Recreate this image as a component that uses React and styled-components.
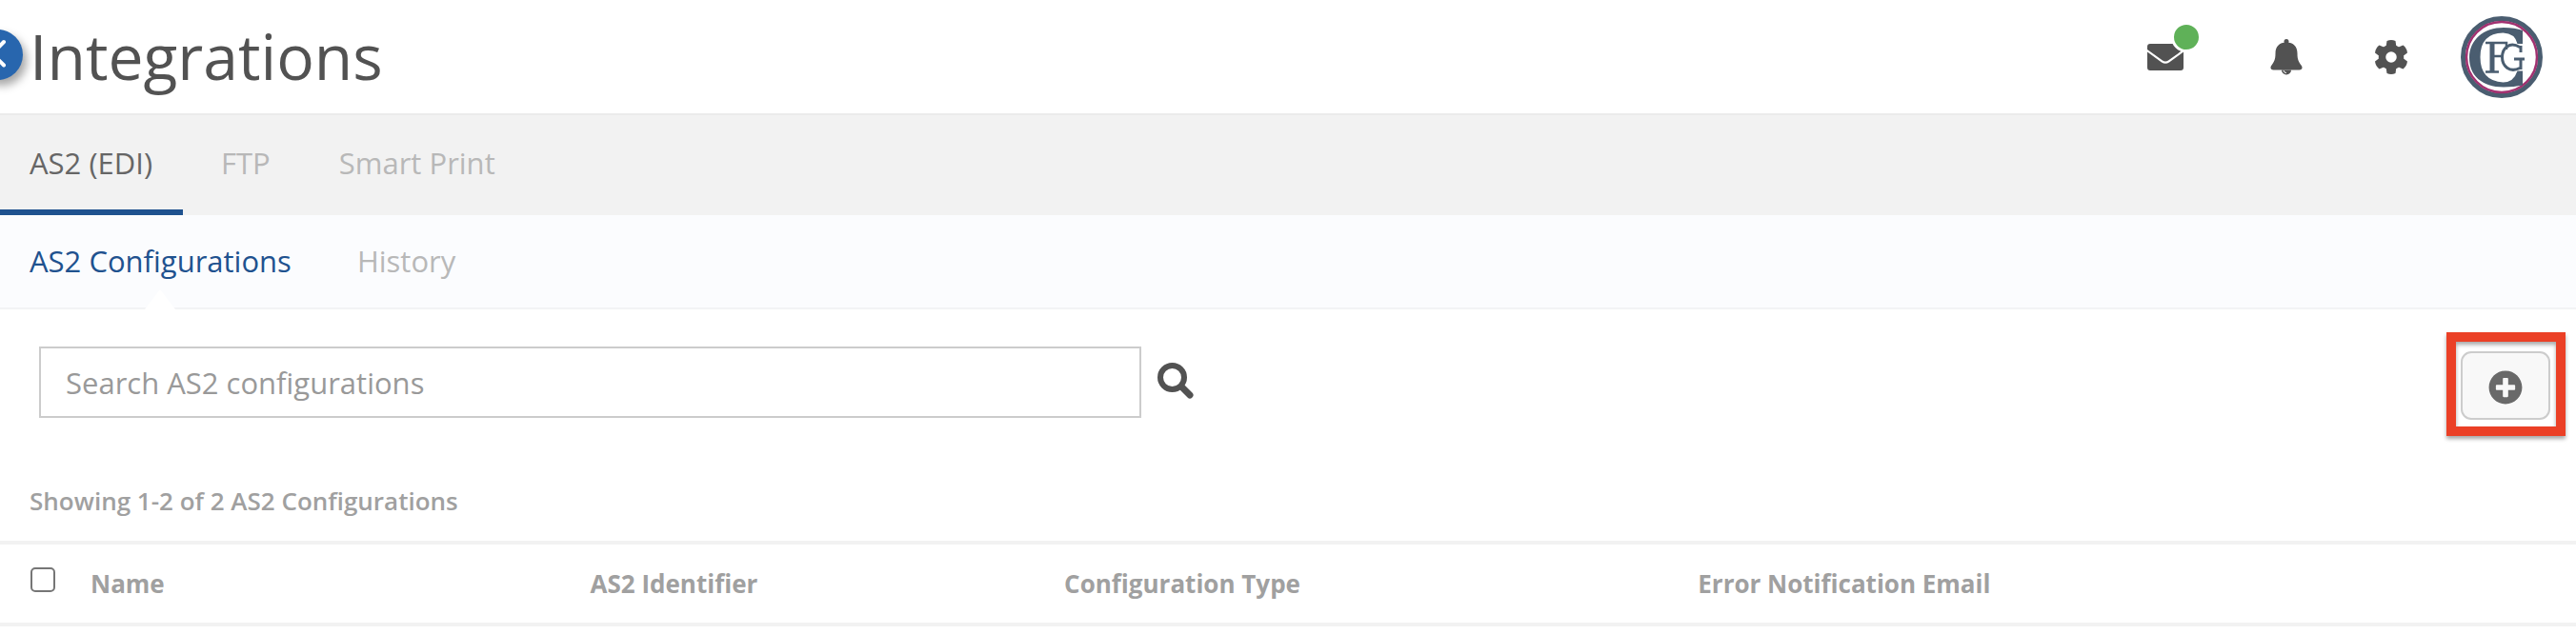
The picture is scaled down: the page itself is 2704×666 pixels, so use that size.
import React, { useState } from "react";
import styled, { createGlobalStyle } from "styled-components";
import { FaPlusCircle } from "react-icons/fa";

const GlobalStyle = createGlobalStyle`
  * {
    box-sizing: border-box;
  }

  body {
    margin: 0;
    background-color: #fff;
    color: #525252;
    font-family: "Open Sans", "Noto Sans", sans-serif;
    font-size: 31px;
  }
`;

// Header
const Header = styled.header`
  position: relative;
  display: flex;
  align-items: center;
  justify-content: space-between;
  height: 119px;
  padding: 0 35px 0 31px;
`;

const Title = styled.h1`
  position: relative;
  margin: 0;
  padding-bottom: 3px;
  font-size: 66px;
  font-weight: 400;
  line-height: 116px;
`;

const CollapseButton = styled.button`
  position: absolute;
  top: 31px;
  left: -29px;
  width: 53px;
  height: 53px;
  padding: 0;
  border: none;
  border-radius: 50%;
  background-color: #2866ae;
  box-shadow: 4px 6px 10px rgba(0, 0, 0, 0.35);
  cursor: pointer;

  svg {
    display: block;
  }
`;

const Actions = styled.div`
  display: flex;
  align-items: center;
`;

const IconButton = styled.button`
  position: relative;
  display: flex;
  justify-content: center;
  width: 38px;
  margin-right: ${(props) => props.$gap || "0"};
  padding: 0;
  border: none;
  background: none;
  color: #525252;
  cursor: pointer;
`;

const Badge = styled.span`
  position: absolute;
  top: -23px;
  right: -19px;
  width: 32px;
  height: 32px;
  border: 3px solid #fff;
  border-radius: 50%;
  background-color: #5fb158;
`;

const AvatarLink = styled.a`
  display: block;
  width: 86px;
  height: 86px;

  svg {
    display: block;
  }
`;

// Tabs
const TabBar = styled.nav`
  display: flex;
  gap: 9px;
  height: 107px;
  border-top: 2px solid #ebebeb;
  background-color: #f2f2f2;
`;

const Tab = styled.a`
  padding: 0 32px 0 31px;
  border-bottom: 6px solid ${(props) => (props.$active ? "#1f528f" : "transparent")};
  color: ${(props) => (props.$active ? "#666" : "#b8b8b8")};
  line-height: 100px;
  text-decoration: none;
`;

const SubTabBar = styled.nav`
  display: flex;
  gap: 8px;
  height: 99px;
  border-bottom: 2px solid #f2f3f5;
  background-color: #fbfcfe;
`;

const SubTab = styled.a`
  position: relative;
  padding: 0 30px 0 31px;
  color: ${(props) => (props.$active ? "#1f528f" : "#b8b8b8")};
  line-height: 96px;
  text-decoration: none;
`;

const Notch = styled.span`
  position: absolute;
  bottom: -2px;
  left: 50%;
  margin-left: -16px;
  border: 16px solid transparent;
  border-top: none;
  border-bottom: 21px solid #fff;
`;

// Search
const Toolbar = styled.div`
  display: flex;
  align-items: flex-start;
  justify-content: space-between;
  padding: 24px 11px 0 41px;
`;

const SearchForm = styled.form`
  display: flex;
  align-items: flex-start;
  width: 45.7%;
  padding-top: 15px;
`;

const SearchInput = styled.input`
  flex: 1;
  height: 75px;
  padding: 0 26px;
  border: 2px solid #ccc;
  color: #525252;
  font: inherit;

  &::placeholder {
    color: #999;
    opacity: 1;
  }
`;

const SearchButton = styled.button`
  margin: 17px 0 0 17px;
  padding: 0;
  border: none;
  background: none;
  cursor: pointer;

  svg {
    display: block;
  }
`;

const Highlight = styled.div`
  padding: 10px 6px 7px 5px;
  border: 10px solid #eb4026;
  box-shadow: 0 3px 4px rgba(0, 0, 0, 0.35), inset 0 3px 4px rgba(0, 0, 0, 0.35);
`;

const AddButton = styled.button`
  display: flex;
  align-items: center;
  justify-content: center;
  width: 94px;
  height: 72px;
  padding: 3px 0 0;
  border: 2px solid #ccc;
  border-radius: 11px;
  background-color: #f8f8f8;
  color: #696969;
  font-size: 36px;
  cursor: pointer;
`;

// Results
const Summary = styled.p`
  margin: 0;
  padding: 48px 31px 22px;
  color: #a0a0a0;
  font-size: 26px;
  font-weight: 600;
  line-height: 40px;
`;

const Table = styled.table`
  width: 100%;
  border-top: 4px solid #f2f2f2;
  border-bottom: 4px solid #f2f2f2;
  border-spacing: 0;
  table-layout: fixed;
`;

const HeadCell = styled.th`
  width: ${(props) => props.$width || "auto"};
  height: 82px;
  padding: 0;
  color: #a0a0a0;
  font-size: 26px;
  font-weight: 700;
  text-align: left;
`;

const SelectCell = styled(HeadCell)`
  padding: 0 0 8px 32px;
`;

const Checkbox = styled.input`
  display: block;
  width: 26px;
  height: 26px;
  margin: 0;
  border: 2px solid #767676;
  border-radius: 5px;
  background-color: #fff;
  appearance: none;

  &:checked {
    background-color: #2866ae;
  }
`;

const columns = [
  { label: "Name", width: "19.4%" },
  { label: "AS2 Identifier", width: "18.4%" },
  { label: "Configuration Type", width: "24.6%" },
  { label: "Error Notification Email" },
];

const MailIcon = () => (
  <svg width="38" height="28" viewBox="0 0 38 28" fill="currentColor" aria-hidden="true">
    <path d="M3 0h32a3 3 0 0 1 3 3v3L22 17.5q-3 2-6 0L0 6V3a3 3 0 0 1 3-3z" />
    <path d="M0 8.5l15 11q4 2.500 8 0l15-11V25a3 3 0 0 1-3 3H3a3 3 0 0 1-3-3z" />
  </svg>
);

const BellIcon = () => (
  <svg width="34" height="38" viewBox="0 0 34 38" fill="currentColor" aria-hidden="true">
    <circle cx="17" cy="2.500" r="2.500" />
    <path d="M17 3.500C9.500 3.500 5.500 8 5.500 15c0 7-1.500 9-4 12.500C-.5 30 .5 32.500 3.500 32.500h27c3 0 4-2.500 2-5-2.500-3.500-4-5.500-4-12.500 0-7-4-11.500-11.500-11.500z" />
    <path d="M12 32.500a5 5 0 0 0 10 0z" />
    <path d="M14 33a3 3 0 0 0 3 2.500" fill="none" stroke="#fff" strokeWidth="1" />
  </svg>
);

const GearIcon = () => (
  <svg width="36" height="36" viewBox="-18 -18 36 36" fill="currentColor" aria-hidden="true">
    {[0, 60, 120, 180, 240, 300].map((angle) => (
      <path
        key={angle}
        d="M-5.500-10L-4.500-17Q0-19 4.500-17L5.500-10z"
        transform={`rotate(${angle})`}
      />
    ))}
    <circle r="9.500" fill="none" stroke="currentColor" strokeWidth="7.500" />
  </svg>
);

const SearchIcon = () => (
  <svg width="38" height="38" viewBox="0 0 38 38" fill="none" stroke="#525252" aria-hidden="true">
    <circle cx="15.500" cy="15.500" r="12.500" strokeWidth="6" />
    <path d="M27 27l7 7" strokeWidth="7" strokeLinecap="round" />
    <path d="M24 24l4 4" strokeWidth="5" />
  </svg>
);

const AvatarLogo = () => (
  <svg width="86" height="86" viewBox="0 0 86 86" fill="none" stroke="#4a5d70" aria-hidden="true">
    <circle cx="43" cy="43" r="40.500" fill="#fff" strokeWidth="5" />
    <circle cx="43" cy="43" r="37" stroke="#a23170" strokeWidth="2.500" />
    <path
      d="M65 15v14h-5.500Q57 18 44.500 17.500 20.500 18 20.500 43t24 26.500q11 0 15-12H65v15q-9 2-20 2C22 74.500 9 62 9 43.500S24 12 45 12q12 0 20 3z"
      fill="#4a5d70"
      stroke="none"
    />
    <path d="M33 28v30" strokeWidth="5" />
    <path d="M26 28h22v7M26 58.500h14M35 42h9" strokeWidth="2.500" />
    <path d="M63 38v-7M62 32.500C51 26 43.500 34 43.500 43S51 60 62 54.500M63 56V45M56 45h11" strokeWidth="3" />
  </svg>
);

const App = () => {
  const [query, setQuery] = useState("");

  return (
    <>
      <GlobalStyle />
      <Header>
        <CollapseButton type="button" aria-label="Collapse menu">
          <svg width="53" height="53" viewBox="0 0 53 53" fill="none" stroke="#fff" strokeWidth="4">
            <path d="M33 13L21 25.500l12 12" strokeLinecap="round" />
          </svg>
        </CollapseButton>
        <Title>Integrations</Title>
        <Actions>
          <IconButton type="button" aria-label="Messages" $gap="89px">
            <MailIcon />
            <Badge />
          </IconButton>
          <IconButton type="button" aria-label="Notifications" $gap="72px">
            <BellIcon />
          </IconButton>
          <IconButton type="button" aria-label="Settings" $gap="54px">
            <GearIcon />
          </IconButton>
          <AvatarLink href="#profile" aria-label="Profile">
            <AvatarLogo />
          </AvatarLink>
        </Actions>
      </Header>

      <TabBar>
        <Tab href="#as2" $active>
          AS2 (EDI)
        </Tab>
        <Tab href="#ftp">FTP</Tab>
        <Tab href="#smart-print">Smart Print</Tab>
      </TabBar>
      <SubTabBar>
        <SubTab href="#configurations" $active>
          AS2 Configurations
          <Notch />
        </SubTab>
        <SubTab href="#history">History</SubTab>
      </SubTabBar>

      <main>
        <Toolbar>
          <SearchForm onSubmit={(e) => e.preventDefault()}>
            <SearchInput
              type="text"
              aria-label="Search AS2 configurations"
              placeholder="Search AS2 configurations"
              value={query}
              onChange={(e) => setQuery(e.target.value)}
            />
            <SearchButton type="submit" aria-label="Search">
              <SearchIcon />
            </SearchButton>
          </SearchForm>
          <Highlight>
            <AddButton type="button" aria-label="Add configuration">
              <FaPlusCircle />
            </AddButton>
          </Highlight>
        </Toolbar>

        <Summary>Showing 1-2 of 2 AS2 Configurations</Summary>
        <Table>
          <thead>
            <tr>
              <SelectCell $width="95px">
                <Checkbox type="checkbox" aria-label="Select all" />
              </SelectCell>
              {columns.map((column) => (
                <HeadCell key={column.label} scope="col" $width={column.width}>
                  {column.label}
                </HeadCell>
              ))}
            </tr>
          </thead>
        </Table>
      </main>
    </>
  );
};

export default App;
